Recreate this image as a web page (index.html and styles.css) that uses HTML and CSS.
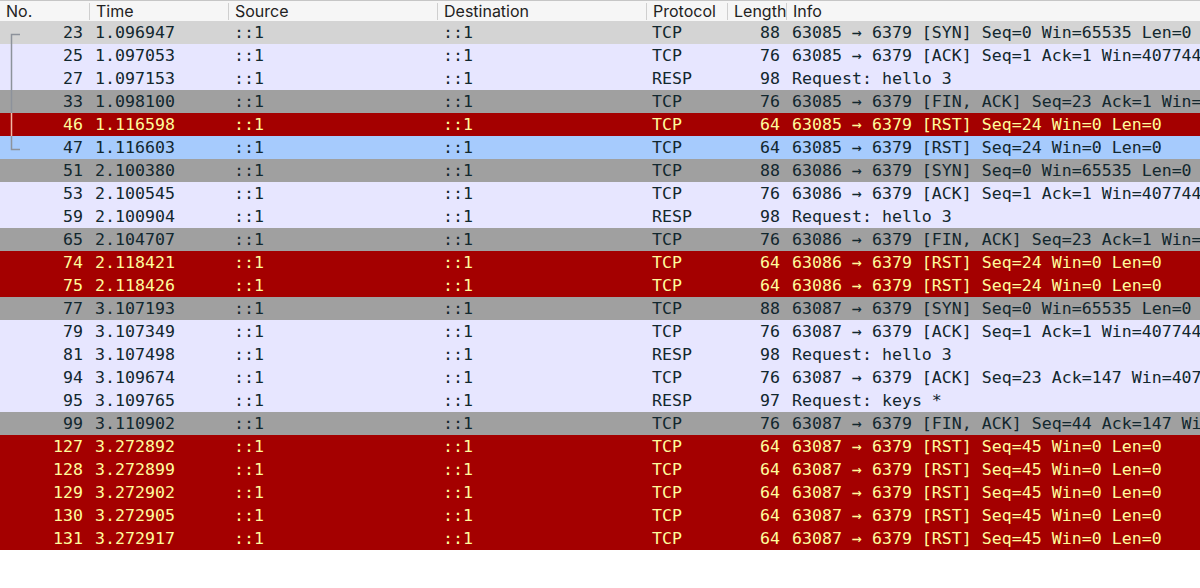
FILE: index.html
```html
<!DOCTYPE html>
<html>
<head>
<meta charset="utf-8">
<link rel="stylesheet" href="styles.css">
</head>
<body>
<div class="list">
  <div class="hdr">
    <div class="hc">No.</div>
    <div class="hc">Time</div>
    <div class="hc">Source</div>
    <div class="hc">Destination</div>
    <div class="hc">Protocol</div>
    <div class="hc">Length</div>
    <div class="hc">Info</div>
  </div>
  <div class="rows">
    <div class="row hl"><span class="r">23</span><span>1.096947</span><span>::1</span><span>::1</span><span>TCP</span><span class="r">88</span><span>63085 → 6379 [SYN] Seq=0 Win=65535 Len=0 MSS=16324 WS=64 TSval=1</span></div>
    <div class="row lav"><span class="r">25</span><span>1.097053</span><span>::1</span><span>::1</span><span>TCP</span><span class="r">76</span><span>63085 → 6379 [ACK] Seq=1 Ack=1 Win=407744 Len=0 TSval=1</span></div>
    <div class="row lav"><span class="r">27</span><span>1.097153</span><span>::1</span><span>::1</span><span>RESP</span><span class="r">98</span><span>Request: hello 3</span></div>
    <div class="row gry"><span class="r">33</span><span>1.098100</span><span>::1</span><span>::1</span><span>TCP</span><span class="r">76</span><span>63085 → 6379 [FIN, ACK] Seq=23 Ack=1 Win=407744 Len=0</span></div>
    <div class="row rst"><span class="r">46</span><span>1.116598</span><span>::1</span><span>::1</span><span>TCP</span><span class="r">64</span><span>63085 → 6379 [RST] Seq=24 Win=0 Len=0</span></div>
    <div class="row sel"><span class="r">47</span><span>1.116603</span><span>::1</span><span>::1</span><span>TCP</span><span class="r">64</span><span>63085 → 6379 [RST] Seq=24 Win=0 Len=0</span></div>
    <div class="row gry"><span class="r">51</span><span>2.100380</span><span>::1</span><span>::1</span><span>TCP</span><span class="r">88</span><span>63086 → 6379 [SYN] Seq=0 Win=65535 Len=0 MSS=16324 WS=64 TSval=1</span></div>
    <div class="row lav"><span class="r">53</span><span>2.100545</span><span>::1</span><span>::1</span><span>TCP</span><span class="r">76</span><span>63086 → 6379 [ACK] Seq=1 Ack=1 Win=407744 Len=0 TSval=1</span></div>
    <div class="row lav"><span class="r">59</span><span>2.100904</span><span>::1</span><span>::1</span><span>RESP</span><span class="r">98</span><span>Request: hello 3</span></div>
    <div class="row gry"><span class="r">65</span><span>2.104707</span><span>::1</span><span>::1</span><span>TCP</span><span class="r">76</span><span>63086 → 6379 [FIN, ACK] Seq=23 Ack=1 Win=407744 Len=0</span></div>
    <div class="row rst"><span class="r">74</span><span>2.118421</span><span>::1</span><span>::1</span><span>TCP</span><span class="r">64</span><span>63086 → 6379 [RST] Seq=24 Win=0 Len=0</span></div>
    <div class="row rst"><span class="r">75</span><span>2.118426</span><span>::1</span><span>::1</span><span>TCP</span><span class="r">64</span><span>63086 → 6379 [RST] Seq=24 Win=0 Len=0</span></div>
    <div class="row gry"><span class="r">77</span><span>3.107193</span><span>::1</span><span>::1</span><span>TCP</span><span class="r">88</span><span>63087 → 6379 [SYN] Seq=0 Win=65535 Len=0 MSS=16324 WS=64 TSval=1</span></div>
    <div class="row lav"><span class="r">79</span><span>3.107349</span><span>::1</span><span>::1</span><span>TCP</span><span class="r">76</span><span>63087 → 6379 [ACK] Seq=1 Ack=1 Win=407744 Len=0 TSval=1</span></div>
    <div class="row lav"><span class="r">81</span><span>3.107498</span><span>::1</span><span>::1</span><span>RESP</span><span class="r">98</span><span>Request: hello 3</span></div>
    <div class="row lav"><span class="r">94</span><span>3.109674</span><span>::1</span><span>::1</span><span>TCP</span><span class="r">76</span><span>63087 → 6379 [ACK] Seq=23 Ack=147 Win=407680 Len=0</span></div>
    <div class="row lav"><span class="r">95</span><span>3.109765</span><span>::1</span><span>::1</span><span>RESP</span><span class="r">97</span><span>Request: keys *</span></div>
    <div class="row gry"><span class="r">99</span><span>3.110902</span><span>::1</span><span>::1</span><span>TCP</span><span class="r">76</span><span>63087 → 6379 [FIN, ACK] Seq=44 Ack=147 Win=407680 Len=0</span></div>
    <div class="row rst"><span class="r">127</span><span>3.272892</span><span>::1</span><span>::1</span><span>TCP</span><span class="r">64</span><span>63087 → 6379 [RST] Seq=45 Win=0 Len=0</span></div>
    <div class="row rst"><span class="r">128</span><span>3.272899</span><span>::1</span><span>::1</span><span>TCP</span><span class="r">64</span><span>63087 → 6379 [RST] Seq=45 Win=0 Len=0</span></div>
    <div class="row rst"><span class="r">129</span><span>3.272902</span><span>::1</span><span>::1</span><span>TCP</span><span class="r">64</span><span>63087 → 6379 [RST] Seq=45 Win=0 Len=0</span></div>
    <div class="row rst"><span class="r">130</span><span>3.272905</span><span>::1</span><span>::1</span><span>TCP</span><span class="r">64</span><span>63087 → 6379 [RST] Seq=45 Win=0 Len=0</span></div>
    <div class="row rst"><span class="r">131</span><span>3.272917</span><span>::1</span><span>::1</span><span>TCP</span><span class="r">64</span><span>63087 → 6379 [RST] Seq=45 Win=0 Len=0</span></div>
    <svg class="bracket" width="24" height="140" viewBox="0 0 24 140">
      <path d="M20 13.5 H11.5 V92" fill="none" stroke="#8d929b" stroke-width="1.5"/>
      <path d="M11.5 92 V115" fill="none" stroke="#f2b8a8" stroke-width="1.5"/>
      <path d="M11.5 115 V128.5 H20" fill="none" stroke="#8d929b" stroke-width="1.5"/>
    </svg>
  </div>
</div>
</body>
</html>
```
FILE: styles.css
```css
html, body {
  margin: 0;
  padding: 0;
  background: #ffffff;
}
.list {
  width: 1200px;
  overflow: hidden;
}
.hdr {
  display: grid;
  grid-template-columns: 89px 139px 209px 209px 81px 59px 1fr;
  height: 20px;
  border-top: 1px solid #c6c6c6;
  background: #f6f6f6;
  font-family: Inter, "Liberation Sans", sans-serif;
  font-size: 16px;
  color: #222222;
}
.hc {
  padding-left: 6px;
  line-height: 20px;
  white-space: nowrap;
  overflow: hidden;
  border-left: 1px solid #d2d2d2;
}
.hc:first-child {
  border-left: none;
}
.hdr .hc:not(:first-child) {
  border-image: linear-gradient(to bottom, transparent 3px, #cfcfcf 3px, #cfcfcf 18px, transparent 18px) 1;
}
.rows {
  position: relative;
}
.row {
  display: grid;
  grid-template-columns: 89px 139px 209px 209px 81px 59px 1fr;
  height: 23px;
  line-height: 23px;
  font-family: "DejaVu Sans Mono", "Liberation Mono", monospace;
  font-size: 16.6px;
  color: #12272e;
  white-space: nowrap;
}
.row span {
  overflow: hidden;
  padding-left: 6px;
}
.row span.r {
  text-align: right;
  padding-left: 0;
  padding-right: 6px;
}
.hl { background: #d4d4d4; }
.lav { background: #e7e6ff; }
.gry { background: #a0a0a0; }
.rst { background: #a40000; color: #fffc9c; }
.sel { background: #a6cbfd; }
.bracket {
  position: absolute;
  left: 0;
  top: 0;
}
```
